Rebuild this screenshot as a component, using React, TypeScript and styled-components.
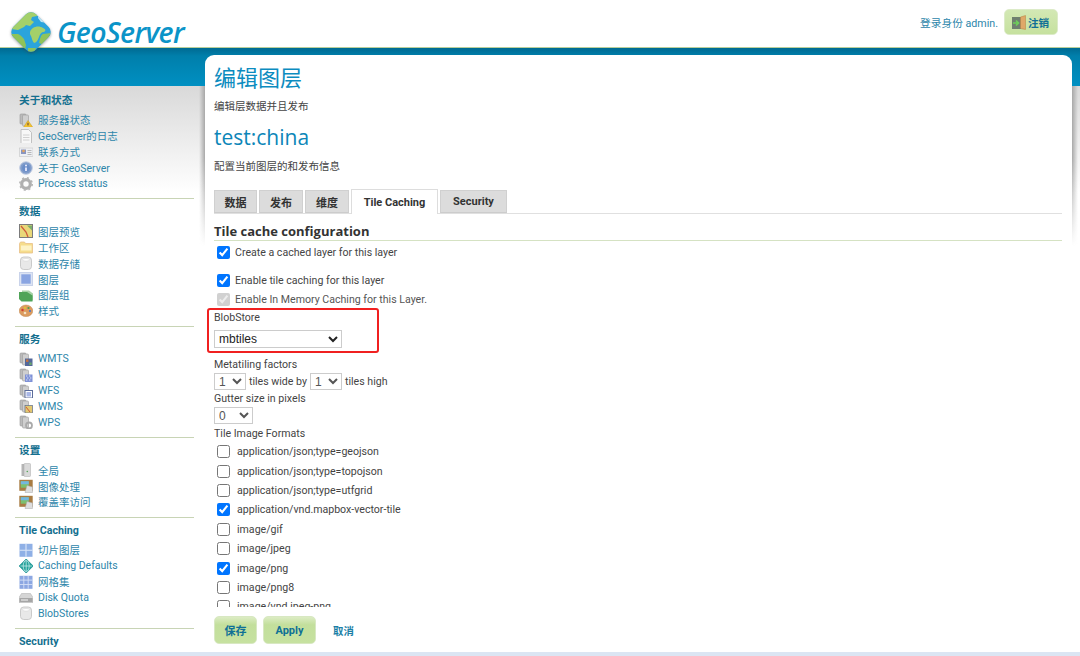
import React from "react";
import styled, { createGlobalStyle } from "styled-components";

const CJK = `Roboto, "Noto Sans CJK SC", sans-serif`;
const Global = createGlobalStyle`
  html, body { margin: 0; padding: 0; height: 100%; overflow: hidden; background: #fff; }
  body { font-family: ${CJK}; font-size: 11px; color: #444; }
`;
const LINK = "#2d86aa";

const Frame = styled.div`display:flex;flex-direction:column;height:656px;width:1080px;overflow:hidden;`;
const Header = styled.header`
  height:47px;flex:none;display:flex;justify-content:space-between;align-items:flex-start;position:relative;z-index:2;
`;
const Brand = styled.div`display:flex;align-items:flex-start;padding:10px 0 0 9px;height:44px;`;
const BrandName = styled.span`
  font-family:"Open Sans",sans-serif;font-weight:600;font-style:italic;font-size:28.4px;line-height:44px;
  letter-spacing:-.6px;color:#0b94c8;margin-left:4px;
`;
const UserBox = styled.div`display:flex;align-items:center;padding:9px 22px 0 0;gap:6px;`;
const UserText = styled.span`color:${LINK};font-size:10.7px;font-family:${CJK};`;
const Logout = styled.button`
  width:54px;height:26px;box-sizing:border-box;border:1px solid #dcebc8;border-radius:5px;padding:0 0 0 6px;
  background:linear-gradient(#d3e8b4,#c6e19f);display:flex;align-items:center;gap:2px;
  font:700 10.6px ${CJK};color:#0f6f96;
`;
const Shell = styled.div`
  flex:1;min-height:0;display:flex;overflow:hidden;border-top:1px solid #b9cf9a;
  background:linear-gradient(#d9d9d9 38px,#fff 145px);
  position:relative;
`;
const Band = styled.div`
  position:absolute;left:0;right:0;top:0;height:38px;background:linear-gradient(#006a92 0,#007fab 8px,#0090c2 100%);
`;
const Sidebar = styled.nav`width:205px;flex:none;box-sizing:border-box;padding:45px 11px 0 15px;position:relative;`;
const Section = styled.section`
  padding:0 0 7px;border-bottom:1px solid #c8d4b5;margin-bottom:5px;
  &:last-child{border-bottom:0;}
`;
const SectionTitle = styled.h3`
  margin:0 0 3px 4px;font:700 10.7px/16px ${CJK};color:#14708f;
`;
const NavList = styled.ul`list-style:none;margin:0;padding:0 0 0 4px;`;
const NavItem = styled.li`height:15.9px;display:flex;align-items:center;gap:5px;color:${LINK};font-size:10.5px;white-space:nowrap;`;
const Panel = styled.main`
  width:867px;flex:none;margin-top:7px;box-sizing:border-box;background:#fff;border-radius:9px 9px 0 0;
  padding:0 10px 8px 9px;display:flex;flex-direction:column;position:relative;
  &::before{content:"";position:absolute;left:-6px;right:-6px;top:31px;height:160px;pointer-events:none;
    background:linear-gradient(to right,transparent,#a8a8a8 6px,transparent 6px,transparent calc(100% - 6px),#a8a8a8 calc(100% - 6px),transparent);
    -webkit-mask-image:linear-gradient(#000 45%,transparent);mask-image:linear-gradient(#000 45%,transparent);}
`;
const PageTitle = styled.h1`margin:9px 0 0;font:400 22px/30px ${CJK};color:#0c8cc0;`;
const Sub = styled.p`margin:5px 0 0;font-size:10.5px;line-height:16px;color:#444;`;
const LayerName = styled.h2`margin:7px 0 0;font:400 21px/30px "Open Sans",sans-serif;color:#0c86b8;`;
const Sub2 = styled.p`margin:7px 0 0;font-size:10.5px;line-height:16px;color:#444;`;
const Tabs = styled.div`display:flex;gap:2px;margin-top:15px;height:23px;border-bottom:1px solid #e0e0e0;box-sizing:content-box;`;
const Tab = styled.div<{ $w: number; $active?: boolean }>`
  width:${p => p.$w}px;box-sizing:border-box;height:${p => (p.$active ? 25 : 23)}px;margin-top:${p => (p.$active ? -1 : 0)}px;
  display:flex;align-items:center;justify-content:center;font:700 11px ${CJK};color:#333;
  background:${p => (p.$active ? "#fff" : "#dcdcdc")};
  border:1px solid ${p => (p.$active ? "#ddd" : "#d0d0d0")};border-bottom:${p => (p.$active ? "0" : "1px solid #ccc")};
`;
const FormArea = styled.div`flex:1;min-height:0;overflow:hidden;margin:0 0 9px -8px;padding-left:8px;`;
const FormTitle = styled.h3`margin:9px 0 0;height:17px;box-sizing:content-box;font:700 13px/17px "Open Sans",sans-serif;color:#333;border-bottom:1px solid #d5e2c3;`;
const CheckRow = styled.label<{ $mt?: number; $muted?: boolean }>`
  display:flex;align-items:center;height:19px;margin-top:${p => p.$mt ?? 0}px;font-size:10.6px;color:${p => (p.$muted ? "#555" : "#444")};
`;
const Check = styled.input`width:13px;height:13px;margin:0 5px 0 3px;flex:none;`;
const FieldLabel = styled.div<{ $mt?: number }>`height:15px;line-height:15px;font-size:10.6px;margin-top:${p => p.$mt ?? 0}px;color:#444;`;
const Select = styled.select<{ $w: number; $h?: number; $mt?: number; $large?: boolean }>`
  width:${p => p.$w}px;height:${p => p.$h ?? 17}px;box-sizing:border-box;border:1px solid #ccc;background:#fff;border-radius:0;padding:0;
  margin-top:${p => p.$mt ?? 0}px;
  font:12px "Liberation Sans",sans-serif;color:${p => (p.$large ? "#222" : "#555")};display:block;
`;
const InlineFields = styled.div`display:flex;align-items:center;gap:3px;height:17px;font-size:10.6px;margin-top:1px;`;
const FormatList = styled.div`margin-top:1px;`;
const FormatRow = styled.label`display:flex;align-items:center;height:19.4px;font-size:10.6px;color:#444;`;
const FormatCheck = styled(Check)`margin:0 7px 0 3px;`;
const Actions = styled.div`display:flex;align-items:center;height:28px;flex:none;gap:6px;`;
const ActionButton = styled.button<{ $w: number }>`
  width:${p => p.$w}px;height:28px;box-sizing:border-box;border:1px solid #d8e8c2;border-radius:5px;padding:0;
  background:linear-gradient(#dcecc4,#c3df9c 30%,#c6e1a0);font:700 11px ${CJK};color:#0f7096;
`;
const CancelLink = styled.a`font:700 10.4px ${CJK};color:#1b7fa6;margin-left:11px;`;
const BottomStrip = styled.div`height:4px;flex:none;background:#dbe5f3;position:relative;z-index:3;`;
const RedBox = styled.div`
  position:relative;margin-top:1px;
  &::after{content:"";position:absolute;left:-7px;top:-2px;width:172px;height:45px;border:2px solid #f02020;border-radius:3px;pointer-events:none;box-sizing:border-box;}
`;
const IconSvg = styled.svg`flex:none;filter:blur(.25px);`;

type IconKind = "status" | "log" | "contact" | "about" | "gear" | "preview" | "folder" | "db" | "layer" | "group" | "palette" | "wmts" | "wcs" | "wfs" | "wms" | "wps" | "global" | "image" | "tile" | "globe" | "grid" | "disk";

const Server = () => (
  <>
    <rect x="1" y="1" width="6" height="10" rx="1" fill="#bbb" stroke="#999" strokeWidth=".6" />
    <rect x="3.5" y="2" width="6" height="11" rx="1" fill="#cfcfcf" stroke="#9a9a9a" strokeWidth=".6" />
  </>
);

const Icon = ({ kind }: { kind: IconKind }) => {
  const body: Record<IconKind, React.ReactNode> = {
    status: <><Server /><path d="M9 7.500l4.800 6.800H4.500z" fill="#f2c230" stroke="#c99a18" strokeWidth=".5" /><path d="M9 9.800v2.600" stroke="#533" strokeWidth=".9" /></>,
    log: <><path d="M2 .5h7.500l3 3v11H2z" fill="#f7f7f7" stroke="#b5b5b5" strokeWidth=".8" /><path d="M4 6h6.500M4 8.500h6.500M4 11h6.500" stroke="#d0d0d0" /></>,
    contact: <><rect x=".5" y="3" width="13.500" height="8.500" fill="#eef0f4" stroke="#c5c5c5" strokeWidth=".6" /><rect x="2" y="4.500" width="5" height="4.500" fill="#8895c0" /><circle cx="4.500" cy="6" r="1.300" fill="#e6a45a" /><path d="M8.500 5.500h4M8.500 7.500h4M8.500 9.500h4" stroke="#aaa" strokeWidth=".8" /></>,
    about: <><circle cx="7" cy="7" r="6.300" fill="#7f9ccb" stroke="#c3cde2" strokeWidth="1" /><circle cx="7" cy="7" r="3.800" fill="#6a8dc8" /><circle cx="7" cy="4.500" r="1" fill="#eef" /><path d="M7 6.500v3.500" stroke="#eef" strokeWidth="1.700" /></>,
    gear: <><circle cx="7" cy="7" r="4.300" fill="none" stroke="#b0b0b0" strokeWidth="3.200" /><circle cx="7" cy="7" r="6.200" fill="none" stroke="#b5b5b5" strokeWidth="1.600" strokeDasharray="2 2.900" /></>,
    preview: <><rect x=".5" y=".5" width="13" height="13" fill="#e9d879" stroke="#7b7b7b" /><path d="M2 2l5 6 2 5" stroke="#d05c3c" strokeWidth="1.300" fill="none" /><path d="M8 1.500h5v5z" fill="#7cb06c" /></>,
    folder: <><path d="M.5 3.500l1-1.500h4l1 1.500h7v9.500H.5z" fill="#f6dd8c" stroke="#e8c088" strokeWidth=".8" /><rect x="2" y="5.500" width="10.500" height="5" fill="#fdf3c6" /></>,
    db: <><rect x="1.500" y="1" width="11" height="12.500" rx="3.200" fill="#e8e8e8" stroke="#c5c5c5" strokeWidth=".9" /><ellipse cx="7" cy="3.800" rx="3.500" ry="1.300" fill="#fff" stroke="#d5d5d5" strokeWidth=".6" /></>,
    layer: <><rect x=".5" y=".5" width="13" height="13" fill="#dde4f3" stroke="#c9d3ea" /><rect x="2.300" y="2.300" width="9.400" height="9.400" fill="#8aa5e2" /></>,
    group: <><path d="M3 2.500h7l4 3v7H3z" fill="#a6d2a6" /><path d="M0 4h8l5.500 3.500v6H2.500L0 11z" fill="#4fa458" /></>,
    palette: <><ellipse cx="7" cy="6.800" rx="6.800" ry="5.800" fill="#dc9c5f" stroke="#c0864f" strokeWidth=".5" /><circle cx="3.500" cy="6" r="1.200" fill="#d23b2e" /><circle cx="6" cy="3.800" r="1.100" fill="#e3c52f" /><circle cx="9.500" cy="4" r="1.100" fill="#4c9b4a" /><circle cx="11" cy="7" r="1.100" fill="#4a74c8" /><circle cx="6" cy="9" r="1.300" fill="#f4e2c6" /></>,
    wmts: <><Server /><rect x="6" y="6.500" width="7.500" height="7.500" fill="#55689a" /><path d="M7 7.500h2.400v2.400H7z" fill="#c7743c" /><path d="M10.200 10.500h2.400v2.400h-2.400z" fill="#6aa76a" /></>,
    wcs: <><Server /><rect x="6" y="6.500" width="7.500" height="7.500" fill="#7f91d6" /><path d="M7 8h1.400M10 8h1.400M8 10h1.400M11 10h1.400M7 12h1.400M10 12h1.400" stroke="#dce3fa" /></>,
    wfs: <><Server /><rect x="6" y="6.500" width="7.500" height="7.500" fill="#fff" stroke="#5c6c9a" /><rect x="7.500" y="8" width="4.500" height="4.500" fill="#a8b6e6" /></>,
    wms: <><Server /><rect x="6" y="6.500" width="7.500" height="7.500" fill="#e3c870" stroke="#5d6d8c" strokeWidth=".7" /><path d="M7 8l4 5" stroke="#d0583a" /></>,
    wps: <><Server /><circle cx="10" cy="10.500" r="3" fill="none" stroke="#aaa" strokeWidth="1.800" /></>,
    global: <><rect x="2.500" y="1" width="6" height="12" fill="#b5b5b5" /><rect x="5" y=".5" width="6.500" height="13" rx=".8" fill="#d9d9d9" stroke="#aaa" strokeWidth=".5" /><circle cx="8.300" cy="8.500" r=".8" fill="#57a65a" /></>,
    image: <><rect x=".3" y=".8" width="13.400" height="11" fill="#a97c43" /><rect x="1.800" y="2.200" width="8" height="6.500" fill="#7cc06e" /><path d="M1.800 2.200h8v3h-8z" fill="#74b6e0" /><path d="M8 6.500l5.500 1.500v5.500H6z" fill="#ddd" stroke="#aaa" strokeWidth=".5" /></>,
    tile: <><rect x=".5" y=".8" width="13" height="13" fill="#8fb0e6" /><path d="M7 .8v13M.5 7.300h13" stroke="#dbe6f8" strokeWidth="1.100" /></>,
    globe: <><path d="M7.200 0l7 7-7 7-7-7z" fill="#24a39a" stroke="#1c8d90" strokeWidth=".8" strokeLinejoin="round" /><ellipse cx="7.200" cy="7" rx="3" ry="5.500" fill="none" stroke="#c3e9ea" strokeWidth=".8" /><path d="M1.500 7h11.400M7.200 1.500v11" stroke="#c3e9ea" strokeWidth=".8" /></>,
    grid: <><rect x=".5" y=".8" width="13" height="13" fill="#8ca7e2" /><path d="M4.800 .8v13M9.200 .8v13M.5 5.100h13M.5 9.500h13" stroke="#d6e0f6" strokeWidth=".9" /></>,
    disk: <><path d="M2.500 2.500h9l2.500 4v5H0v-5z" fill="#d5d5d5" stroke="#aaa" strokeWidth=".5" /><rect x=".5" y="7" width="13" height="4" fill="#a6a6a6" /><rect x="2" y="8.400" width="7" height="1.200" fill="#e8e8e8" /></>,
  };
  return <IconSvg width="14" height="14" viewBox="0 0 14 14">{body[kind]}</IconSvg>;
};

const LogoSvg = styled.svg`flex:none;filter:drop-shadow(0 1px 1.500px rgba(60,60,60,.45));`;
const LogoMark = () => (
  <LogoSvg width="44" height="44" viewBox="0 0 44 44">
    <defs>
      <clipPath id="diamond"><rect x="6" y="6" width="32" height="32" rx="7" transform="rotate(45 22 22)" /></clipPath>
    </defs>
    <rect x="6" y="6" width="32" height="32" rx="7" transform="rotate(45 22 22)" fill="#2ba4dc" />
    <g clipPath="url(#diamond)">
      <path d="M14 1h16l-2 5-5 1-1 3 3 2-4 4-4-1-2 2-6 3-7-1 4-7 4-4z" fill="#a4d06a" />
      <path d="M24 18c3-2 7-2 10 0 3 1 3 3 1 4-3 0-4 2-5 5-1 3-3 6-5 6-2-2-2-5-3-7-2-3-1-6 2-8z" fill="#a4d06a" />
      <path d="M34 24l8-1-7 12-5-2c1-3 1-7 4-9z" fill="#8fc35a" />
      <path d="M1 24l8 0c3 1 4 3 6 5l2 6-2 10-6-6-8-12z" fill="#8fc35a" />
      <path d="M19 38h8l-2 6h-6z" fill="#8fc35a" />
      <path d="M30 3l9 10-7-1-3-4z" fill="#bfe6f6" />
    </g>
  </LogoSvg>
);

const DoorIcon = () => (
  <IconSvg width="15" height="15" viewBox="0 0 15 15">
    <rect x="1" y="2" width="9" height="12" fill="#6f7f6f" />
    <path d="M9.500 2l5-1.500v14l-5-1z" fill="#dfa868" stroke="#b57f3e" strokeWidth=".5" />
    <path d="M2 8h5M5 5.500L7.500 8 5 10.500" stroke="#6ed05a" strokeWidth="1.600" fill="none" />
  </IconSvg>
);

const nav: { title: string; items: [IconKind, string][] }[] = [
  { title: "关于和状态", items: [["status", "服务器状态"], ["log", "GeoServer的日志"], ["contact", "联系方式"], ["about", "关于 GeoServer"], ["gear", "Process status"]] },
  { title: "数据", items: [["preview", "图层预览"], ["folder", "工作区"], ["db", "数据存储"], ["layer", "图层"], ["group", "图层组"], ["palette", "样式"]] },
  { title: "服务", items: [["wmts", "WMTS"], ["wcs", "WCS"], ["wfs", "WFS"], ["wms", "WMS"], ["wps", "WPS"]] },
  { title: "设置", items: [["global", "全局"], ["image", "图像处理"], ["image", "覆盖率访问"]] },
  { title: "Tile Caching", items: [["tile", "切片图层"], ["globe", "Caching Defaults"], ["grid", "网格集"], ["disk", "Disk Quota"], ["db", "BlobStores"]] },
  { title: "Security", items: [] },
];

const tabs: [string, number, boolean?][] = [["数据", 43], ["发布", 44], ["维度", 44], ["Tile Caching", 87, true], ["Security", 67]];

const formats: [string, boolean][] = [
  ["application/json;type=geojson", false],
  ["application/json;type=topojson", false],
  ["application/json;type=utfgrid", false],
  ["application/vnd.mapbox-vector-tile", true],
  ["image/gif", false],
  ["image/jpeg", false],
  ["image/png", true],
  ["image/png8", false],
  ["image/vnd.jpeg-png", false],
];

export default function App() {
  return (
    <Frame>
      <Global />
      <Header>
        <Brand>
          <LogoMark />
          <BrandName>GeoServer</BrandName>
        </Brand>
        <UserBox>
          <UserText>登录身份 admin.</UserText>
          <Logout><DoorIcon />注销</Logout>
        </UserBox>
      </Header>
      <Shell>
        <Band />
        <Sidebar>
          {nav.map(s => (
            <Section key={s.title}>
              <SectionTitle>{s.title}</SectionTitle>
              <NavList>
                {s.items.map(([k, t]) => (
                  <NavItem key={t}><Icon kind={k} />{t}</NavItem>
                ))}
              </NavList>
            </Section>
          ))}
        </Sidebar>
        <Panel>
          <PageTitle>编辑图层</PageTitle>
          <Sub>编辑层数据并且发布</Sub>
          <LayerName>test:china</LayerName>
          <Sub2>配置当前图层的和发布信息</Sub2>
          <Tabs>
            {tabs.map(([t, w, a]) => <Tab key={t} $w={w} $active={a}>{t}</Tab>)}
          </Tabs>
          <FormArea>
            <FormTitle>Tile cache configuration</FormTitle>
            <CheckRow $mt={2}><Check type="checkbox" defaultChecked />Create a cached layer for this layer</CheckRow>
            <CheckRow $mt={9}><Check type="checkbox" defaultChecked />Enable tile caching for this layer</CheckRow>
            <CheckRow $muted><Check type="checkbox" defaultChecked disabled />Enable In Memory Caching for this Layer.</CheckRow>
            <RedBox>
              <FieldLabel>BlobStore</FieldLabel>
              <Select $w={128} $h={18} $mt={5} $large defaultValue="mbtiles"><option>mbtiles</option></Select>
            </RedBox>
            <FieldLabel $mt={9}>Metatiling factors</FieldLabel>
            <InlineFields>
              <Select $w={32} defaultValue="1"><option>1</option></Select>
              tiles wide by
              <Select $w={32} defaultValue="1"><option>1</option></Select>
              tiles high
            </InlineFields>
            <FieldLabel $mt={1}>Gutter size in pixels</FieldLabel>
            <Select $w={39} $mt={1} defaultValue="0"><option>0</option></Select>
            <FieldLabel $mt={2}>Tile Image Formats</FieldLabel>
            <FormatList>
              {formats.map(([t, c]) => (
                <FormatRow key={t}><FormatCheck type="checkbox" defaultChecked={c} />{t}</FormatRow>
              ))}
            </FormatList>
          </FormArea>
          <Actions>
            <ActionButton $w={43}>保存</ActionButton>
            <ActionButton $w={53}>Apply</ActionButton>
            <CancelLink>取消</CancelLink>
          </Actions>
        </Panel>
      </Shell>
      <BottomStrip />
    </Frame>
  );
}
